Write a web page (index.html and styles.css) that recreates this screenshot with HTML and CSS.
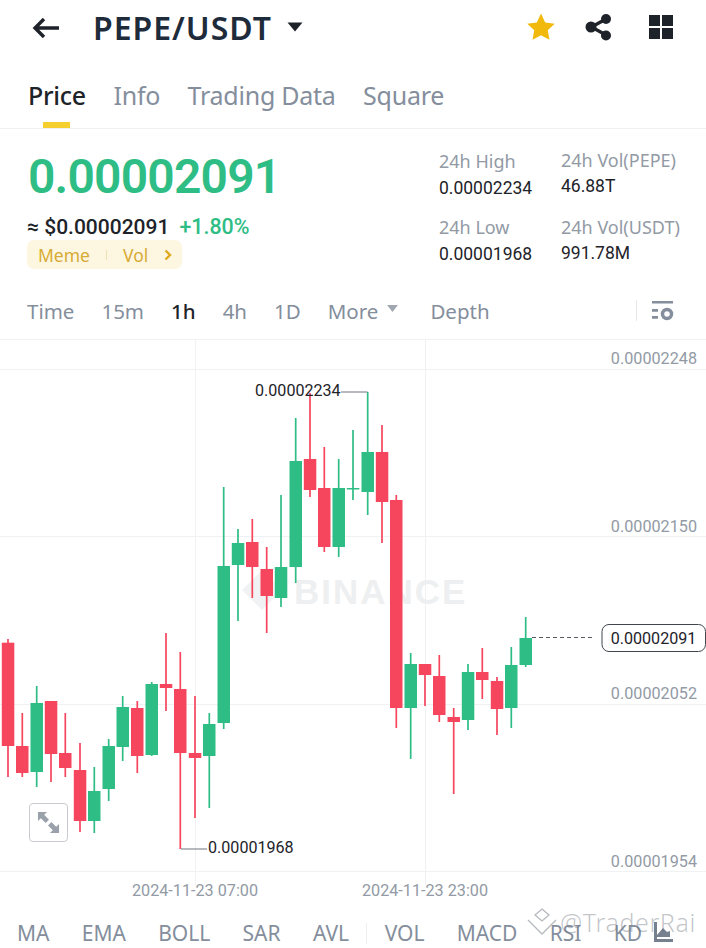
FILE: index.html
```html
<!DOCTYPE html>
<html lang="en">
<head>
<meta charset="utf-8">
<title>PEPE/USDT</title>
<link rel="stylesheet" href="styles.css">
</head>
<body>
<div class="page">
  <header class="topbar">
    <svg class="back" viewBox="0 0 28 22"><path d="M27 11H3M12 2l-9 9 9 9"/></svg>
    <h1 class="pair">PEPE/USDT</h1>
    <svg class="caret" viewBox="0 0 18 12"><path d="M1.500 1.500h15L9 10.500z"/></svg>
    <div class="top-icons">
      <svg class="star" viewBox="0 0 28 28"><path d="M14 1.500l3.900 8.200 8.900 1.200-6.500 6.200 1.600 8.900-7.900-4.300-7.900 4.300 1.600-8.900-6.500-6.200 8.900-1.200z"/></svg>
      <svg class="share" viewBox="0 0 28 28"><path class="share-line" d="M21 6L6.500 14 21 22"/><circle cx="21" cy="6" r="5"/><circle cx="6" cy="14" r="5.500"/><circle cx="21" cy="22.500" r="5"/></svg>
      <svg class="grid-icon" viewBox="0 0 26 26"><path d="M1 1h11v11H1zM14 1h11v11H14zM1 14h11v11H1zM14 14h11v11H14z"/></svg>
    </div>
  </header>

  <nav class="tabs">
    <span class="tab tab-on">Price</span>
    <span class="tab">Info</span>
    <span class="tab">Trading Data</span>
    <span class="tab">Square</span>
  </nav>

  <section class="summary">
    <div class="quote">
      <div class="last">0.00002091</div>
      <div class="fiat-row"><span class="fiat">≈ $0.00002091</span><span class="change">+1.80%</span></div>
      <div class="tags"><span>Meme</span><i class="tag-sep"></i><span>Vol</span>
        <svg class="tag-arrow" viewBox="0 0 8 12"><path d="M1.500 1.500L6 6l-4.500 4.500"/></svg></div>
    </div>
    <dl class="stats stats-a">
      <dt>24h High</dt><dd>0.00002234</dd>
      <dt>24h Low</dt><dd>0.00001968</dd>
    </dl>
    <dl class="stats stats-b">
      <dt>24h Vol(PEPE)</dt><dd>46.88T</dd>
      <dt>24h Vol(USDT)</dt><dd>991.78M</dd>
    </dl>
  </section>

  <div class="intervals">
    <span>Time</span><span>15m</span><span class="iv-on">1h</span><span>4h</span><span>1D</span>
    <span class="more">More<svg viewBox="0 0 14 10"><path d="M1 1h12L7 9z"/></svg></span>
    <span>Depth</span>
    <i class="iv-sep"></i>
    <svg class="iv-settings" viewBox="0 0 23 22"><path d="M1 1h21v2.600H1zM1 9h6v2.800H1zM1 16h6v2.800H1z"/><circle class="gear" cx="16" cy="14" r="4.500"/></svg>
  </div>

  <section class="chart">
    <svg class="plot" viewBox="0 339 706 562">
      <g class="gridlines">
        <path d="M0 339.500H706M0 369.500H706M0 536.500H706M0 704.500H706M0 871.500H706M195.500 339V885M425.500 339V885"/>
      </g>
      <g class="mark">
        <path d="M262 570l20 20-20 20-20-20z"/>
        <text x="294" y="604">BINANCE</text>
      </g>
      <g class="axis">
        <text x="697" y="364">0.00002248</text>
        <text x="697" y="532">0.00002150</text>
        <text x="697" y="699">0.00002052</text>
        <text x="697" y="867">0.00001954</text>
      </g>
      <g class="dates">
        <text x="195" y="896">2024-11-23 07:00</text>
        <text x="425" y="896">2024-11-23 23:00</text>
      </g>
      <g class="red">
        <path d="M8 639V777M22.300 713V777M51 701V782M65.300 713V777M80 743V832M137.300 701V773M166 633V711M180.300 652V849M195 696V818M252.300 519V598M266.700 547V633M310 393V497M324.300 447V552M382 425V543M396.300 495V728M425 664V706M439.300 655V722M453.700 708V794M482.300 648V699M497 677V735"/>
        <rect x="1.800" y="642.700" width="12.500" height="103.300"/>
        <rect x="16" y="746" width="12.500" height="27"/>
        <rect x="44.800" y="701" width="12.500" height="53"/>
        <rect x="59" y="753" width="12.500" height="15"/>
        <rect x="73.800" y="770" width="12.500" height="51"/>
        <rect x="131" y="708" width="12.500" height="48"/>
        <rect x="159.800" y="684" width="12.500" height="4"/>
        <rect x="174" y="689" width="12.500" height="64"/>
        <rect x="188.800" y="753" width="12.500" height="5"/>
        <rect x="246" y="542" width="12.500" height="25"/>
        <rect x="260.500" y="569" width="12.500" height="27"/>
        <rect x="303.800" y="459" width="12.500" height="31"/>
        <rect x="318" y="488" width="12.500" height="59"/>
        <rect x="375.800" y="452" width="12.500" height="50"/>
        <rect x="390" y="500" width="12.500" height="208"/>
        <rect x="418.800" y="664" width="12.500" height="11"/>
        <rect x="433" y="676" width="12.500" height="39"/>
        <rect x="447.500" y="717" width="12.500" height="5"/>
        <rect x="476" y="672" width="12.500" height="8"/>
        <rect x="490.800" y="681" width="12.500" height="28"/>
      </g>
      <g class="green">
        <path d="M36.700 686V787M94.300 767V833M108.700 739V801M122.700 696V761M151.700 682V756M209.300 713V808M223.700 487V729M238 529V621M281 495V607M295.700 418V583M338.700 459V557M353 430V500M367.700 392V515M410.700 653V759M468 664V730M511.300 647V728M525.700 617V667"/>
        <rect x="30.500" y="703" width="12.500" height="69"/>
        <rect x="88" y="791" width="12.500" height="30"/>
        <rect x="102.500" y="746" width="12.500" height="43"/>
        <rect x="116.500" y="707" width="12.500" height="40"/>
        <rect x="145.500" y="684" width="12.500" height="71"/>
        <rect x="203" y="724" width="12.500" height="32"/>
        <rect x="217.500" y="566" width="12.500" height="157"/>
        <rect x="231.800" y="543" width="12.500" height="22"/>
        <rect x="274.800" y="567" width="12.500" height="31"/>
        <rect x="289.500" y="461" width="12.500" height="106"/>
        <rect x="332.500" y="488" width="12.500" height="59"/>
        <rect x="346.800" y="488" width="12.500" height="1.500"/>
        <rect x="361.500" y="452" width="12.500" height="40"/>
        <rect x="404.500" y="664" width="12.500" height="44"/>
        <rect x="461.800" y="672" width="12.500" height="48"/>
        <rect x="505" y="665" width="12.500" height="43"/>
        <rect x="519.500" y="638" width="12.500" height="27"/>
      </g>
      <g class="leaders">
        <path d="M341 392H367.500M181 849H207"/>
      </g>
      <path class="last-line" d="M532 637.500H594"/>
      <g class="extreme">
        <text x="255" y="396">0.00002234</text>
        <text x="208" y="853">0.00001968</text>
      </g>
      <rect class="last-box" x="602" y="624.500" width="103.500" height="27" rx="7"/>
      <text class="last-text" x="653.500" y="644">0.00002091</text>
    </svg>
    <button class="expand" type="button" aria-label="Expand">
      <svg viewBox="0 0 24 24"><path d="M1 1h9.500L7.500 4l5 5-3.500 3.500-5-5L1 10.500zM23 23H13.500l3-3-5-5 3.500-3.500 5 5 3-3z"/></svg>
    </button>
  </section>

  <footer class="indicators">
    <span>MA</span><span>EMA</span><span>BOLL</span><span>SAR</span><span>AVL</span>
    <i class="ind-sep"></i>
    <span>VOL</span><span>MACD</span><span>RSI</span><span>KD</span>
    <svg class="ind-icon" viewBox="0 0 20 20"><path d="M1 0h3v17h16v3H1z"/><path d="M4 13l6-7 4 4 3-1v6H4z"/></svg>
  </footer>

  <div class="credit">
    <svg viewBox="0 0 30 28"><path d="M15 1l7 6-7 6-7-6zM1 12l14 14 14-14"/></svg>
    <span>@TraderRai</span>
  </div>
</div>
</body>
</html>
```

FILE: styles.css
```css
* { box-sizing: border-box; }
html, body { margin: 0; padding: 0; background: #fff; }
body { font-family: "Noto Sans", "Liberation Sans", sans-serif; color: #1e2329; }
.page { position: relative; width: 706px; height: 948px; overflow: hidden; background: #fff; }

.topbar { display: flex; align-items: center; height: 56px; padding-left: 32px; }
.back { width: 28px; height: 22px; fill: none; stroke: #1e2329; stroke-width: 3.400; }
.pair { margin: 0 0 0 33px; font-size: 32px; font-weight: 600; line-height: 56px; letter-spacing: 1px; color: #1e2b3a; }
.caret { width: 18px; height: 12px; margin: -3px 0 0 14px; fill: #1e2329; }
.top-icons { display: flex; align-items: center; margin-left: auto; padding-right: 32px; }
.star { width: 30px; height: 30px; margin-top: -2px; fill: #f0b90b; }
.share { width: 28px; height: 28px; margin-left: 29px; margin-top: -2px; fill: #1e2329; }
.share-line { fill: none; stroke: #1e2329; stroke-width: 3.400; }
.grid-icon { width: 26px; height: 26px; margin-left: 35px; margin-top: -2px; fill: #1e2329; }

.tabs { display: flex; gap: 27.500px; height: 73px; padding: 17px 0 0 28px; border-bottom: 1px solid #eef0f2; }
.tab { position: relative; font-size: 25px; line-height: 44px; height: 44px; letter-spacing: -.25px; color: #848e9c; }
.tab-on { color: #1e2329; font-weight: 500; }
.tab-on::after { content: ""; position: absolute; left: 15px; top: 49px; width: 27px; height: 6px; background: #f5cf2e; }

.summary { display: flex; height: 161px; padding: 0 0 0 27px; }
.quote { width: 412px; }
.last { margin-top: 18px; padding-left: 1px; font-family: Roboto, sans-serif; font-size: 48px; font-weight: 600; line-height: 60px; letter-spacing: -.8px; color: #2ebd85; }
.fiat-row { display: flex; align-items: center; height: 27px; margin-top: 6px; }
.fiat { font-family: Roboto, sans-serif; font-size: 21px; font-weight: 500; color: #1e2329; }
.change { margin-left: 10px; font-family: Roboto, sans-serif; font-size: 21.400px; font-weight: 500; color: #2ebd85; }
.tags { display: flex; align-items: center; width: 155px; height: 29px; padding-left: 11px; border-radius: 7px; background: #fdf6e1; font-size: 17.500px; color: #d8ab35; }
.tag-sep { width: 1px; height: 10px; margin: 0 16px; background: #eee0b5; }
.tag-arrow { width: 8px; height: 12px; margin-left: 16px; fill: none; stroke: #e0a91e; stroke-width: 2.400; }

.stats { margin: 0; }
.stats dt { font-size: 18px; line-height: 24px; color: #929aa5; }
.stats dd { margin: 3px 0 0; font-family: Roboto, sans-serif; font-size: 17.500px; line-height: 24px; color: #1e2329; }
.stats dd + dt { margin-top: 15px; }
.stats-a { width: 122px; padding-top: 20px; }
.stats-b { padding-top: 19px; }
.stats-b dd { margin-top: 2px; }
.stats-b dd + dt { margin-top: 17px; }

.intervals { display: flex; align-items: center; gap: 27px; height: 49px; padding: 0 0 8px 27px; font-size: 20.500px; color: #848e9c; }
.iv-on { font-weight: 500; color: #1e2329; }
.more { display: flex; align-items: center; gap: 8px; margin-right: 4px; }
.more svg { width: 13px; height: 9px; margin-top: -4px; fill: #a0a7b1; }
.iv-sep { width: 1px; height: 21px; margin-left: auto; background: #e6e8ea; }
.iv-settings { width: 23px; height: 22px; margin: 0 32px 0 -13px; fill: #848e9c; }
.gear { fill: #fff; stroke: #848e9c; stroke-width: 3.500; }

.chart { position: relative; height: 562px; }
.plot { display: block; width: 706px; height: 562px; font-family: Roboto, sans-serif; }
.gridlines path { fill: none; stroke: #eff1f3; stroke-width: 1; }
.mark path { fill: #f1f2f3; }
.mark text { font-family: "Liberation Sans", sans-serif; font-size: 35px; font-weight: 700; letter-spacing: 2px; fill: #eeeff0; }
.axis text { font-size: 16.200px; text-anchor: end; fill: #929aa5; }
.dates text { font-size: 16.200px; text-anchor: middle; fill: #929aa5; }
.red path { fill: none; stroke: #f6465d; stroke-width: 1.700; }
.red rect { fill: #f6465d; }
.green path { fill: none; stroke: #2ebd85; stroke-width: 1.700; }
.green rect { fill: #2ebd85; }
.leaders path { fill: none; stroke: #6f757c; stroke-width: 1.200; }
.last-line { fill: none; stroke: #555a61; stroke-width: 1; stroke-dasharray: 4 3; }
.extreme text { font-size: 16.100px; fill: #1e2329; }
.last-box { fill: #fff; stroke: #41464d; stroke-width: 1; }
.last-text { font-size: 16.100px; text-anchor: middle; fill: #1e2329; }

.expand { position: absolute; left: 29px; top: 464px; display: flex; align-items: center; justify-content: center; width: 39px; height: 39px; padding: 0; border: 1px solid #c8cbcf; border-radius: 4px; background: #fff; }
.expand svg { width: 23px; height: 23px; fill: #9aa1ab; }

.indicators { display: flex; align-items: center; height: 48px; padding: 16px 0 0 17px; gap: 32.300px; font-size: 21px; color: #848e9c; white-space: nowrap; }
.ind-sep { width: 1px; height: 21px; margin: 0 -15px; background: #eceef0; }
.ind-icon { position: absolute; left: 653px; top: 922px; width: 20px; height: 20px; fill: #76808f; }

.credit { position: absolute; left: 527px; top: 905px; display: flex; align-items: center; gap: 3px; color: rgba(110, 116, 125, .42); font-size: 25px; font-weight: 300; letter-spacing: .6px; white-space: nowrap; }
.credit svg { width: 30px; height: 28px; fill: none; stroke: rgba(110, 116, 125, .5); stroke-width: 1.300; }
```
